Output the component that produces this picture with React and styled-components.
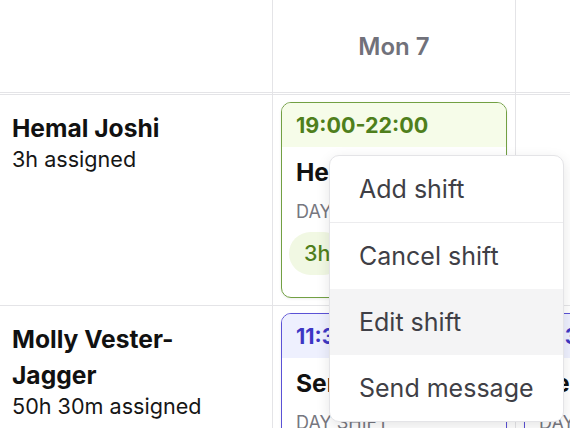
import React from 'react'
import styled, { createGlobalStyle, css } from 'styled-components'

const GlobalStyle = createGlobalStyle`
  html, body {
    margin: 0;
    padding: 0;
    background: #ffffff;
    overflow: hidden;
  }
  body {
    font-family: Inter, "Noto Sans", sans-serif;
    color: #111111;
  }
`

const tones = {
  green: {
    border: '#72a043',
    headBg: '#f6fce9',
    text: '#4f7f1c',
    pill: '#f1f8e3',
  },
  indigo: {
    border: '#5b52d6',
    headBg: '#eef0fe',
    text: '#3d36c4',
    pill: '#eef0fe',
  },
}

const rows = [
  {
    name: 'Hemal Joshi',
    hours: '3h assigned',
    shifts: [
      { time: '19:00-22:00', title: 'Head Chef', label: 'DAY SHIFT', length: '3h', tone: 'green' },
      null,
    ],
  },
  {
    name: 'Molly Vester-Jagger',
    hours: '50h 30m assigned',
    shifts: [
      { time: '11:30-20:00', title: 'Server', label: 'DAY SHIFT', length: '8h 30m', tone: 'indigo' },
      { time: '11:30-20:00', title: 'Server', label: 'DAY SHIFT', length: '8h 30m', tone: 'indigo' },
    ],
  },
]

const menuItems = [
  { label: 'Add shift', divider: true },
  { label: 'Cancel shift' },
  { label: 'Edit shift', active: true },
  { label: 'Send message' },
]

function App() {
  return (
    <Page>
      <GlobalStyle />
      <Schedule>
        <HeadCell />
        <HeadCell>Mon 7</HeadCell>
        <HeadCell>Tue 8</HeadCell>

        {rows.map((row) => (
          <React.Fragment key={row.name}>
            <PersonCell>
              <PersonName>{row.name}</PersonName>
              <Assigned>{row.hours}</Assigned>
            </PersonCell>
            {row.shifts.map((shift, i) => (
              <ShiftCell key={i}>
                {shift && (
                  <Card tone={shift.tone}>
                    <CardHead tone={shift.tone}>{shift.time}</CardHead>
                    <CardBody>
                      <CardTitle>{shift.title}</CardTitle>
                      <CardLabel>{shift.label}</CardLabel>
                      <Pill tone={shift.tone}>{shift.length}</Pill>
                    </CardBody>
                  </Card>
                )}
              </ShiftCell>
            ))}
          </React.Fragment>
        ))}
      </Schedule>

      <Menu>
        {menuItems.map((item) => (
          <MenuItem key={item.label} active={item.active} divider={item.divider}>
            {item.label}
          </MenuItem>
        ))}
      </Menu>
    </Page>
  )
}

const Page = styled.div`
  position: relative;
  width: 760px;
`

const Schedule = styled.div`
  display: grid;
  grid-template-columns: 273px 243px 243px;
`

const gridLine = '#e4e4e7'

const HeadCell = styled.div`
  height: 92px;
  display: flex;
  align-items: center;
  justify-content: center;
  border-right: 1px solid ${gridLine};
  border-bottom: 3px double ${gridLine};
  font-size: 24px;
  font-weight: 600;
  color: #71717a;
`

const PersonCell = styled.div`
  box-sizing: border-box;
  padding: 15px 12px;
  border-right: 1px solid ${gridLine};
  border-bottom: 1px solid ${gridLine};
`

const PersonName = styled.div`
  font-size: 24.6px;
  line-height: 36px;
  font-weight: 700;
  color: #111111;
  max-width: 200px;
`

const Assigned = styled.div`
  font-size: 21.6px;
  line-height: 27px;
  color: #161616;
`

const ShiftCell = styled.div`
  box-sizing: border-box;
  padding: 7px 8px;
  border-right: 1px solid ${gridLine};
  border-bottom: 1px solid ${gridLine};
`

const Card = styled.div`
  border: 1px solid ${(p) => tones[p.tone].border};
  border-radius: 10px;
  overflow: hidden;
  background: #ffffff;
  box-shadow: 0 1px 3px rgba(0, 0, 0, 0.07);
`

const CardHead = styled.div`
  padding: 8px 14px;
  font-size: 21.5px;
  line-height: 28px;
  font-weight: 700;
  white-space: nowrap;
  ${(p) => css`
    background: ${tones[p.tone].headBg};
    color: ${tones[p.tone].text};
  `}
`

const CardBody = styled.div`
  padding: 9px 14px 22px;
`

const CardTitle = styled.div`
  font-size: 24.6px;
  line-height: 32px;
  font-weight: 700;
  color: #111111;
  white-space: nowrap;
`

const CardLabel = styled.div`
  margin-top: 12px;
  font-size: 18px;
  line-height: 24px;
  color: #77777f;
`

const Pill = styled.div`
  display: inline-block;
  margin: 8px 0 0 -7px;
  padding: 7px 15px 8px;
  border-radius: 999px;
  font-size: 21.5px;
  line-height: 28px;
  font-weight: 500;
  ${(p) => css`
    background: ${tones[p.tone].pill};
    color: ${tones[p.tone].text};
  `}
`

const Menu = styled.div`
  position: absolute;
  left: 329px;
  top: 155px;
  width: 235px;
  box-sizing: border-box;
  background: #ffffff;
  border: 1px solid #e4e4e7;
  border-radius: 10px;
  box-shadow: 0 4px 14px rgba(0, 0, 0, 0.1);
  overflow: hidden;
`

const MenuItem = styled.div`
  height: 66px;
  display: flex;
  align-items: center;
  padding-left: 29px;
  font-size: 25px;
  color: #3f3f46;
  background: ${(p) => (p.active ? '#f4f4f5' : 'transparent')};
  border-bottom: ${(p) => (p.divider ? '1px solid #ececee' : 'none')};
`

export default App
